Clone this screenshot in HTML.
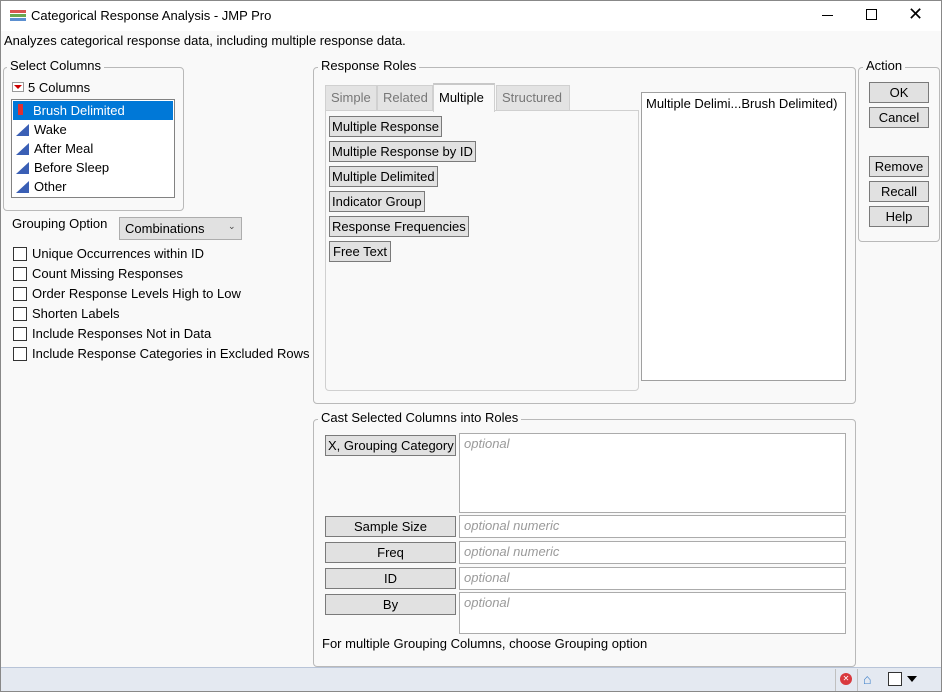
<!DOCTYPE html>
<html><head><meta charset="utf-8"><style>
*{box-sizing:border-box;margin:0;padding:0}
body{width:942px;height:692px;overflow:hidden;background:#f9f9f9;font-family:"Liberation Sans",sans-serif;font-size:13px;color:#000;position:relative}
.a{position:absolute;white-space:nowrap}
.grp{position:absolute;border:1px solid #b9b9b9;border-radius:4px}
.lg{position:absolute;background:#f9f9f9;padding:0 3px;line-height:14px}
.btn{position:absolute;background:#e1e1e1;border:1px solid #7a7a7a;height:21px;line-height:19px;padding:0 2px;white-space:nowrap}
.btc{text-align:center}
.fld{position:absolute;background:#fff;border:1px solid #ababab;color:#9a9a9a;font-style:italic;padding:2px 4px;line-height:16px}
.cb{position:absolute;left:13px;width:14px;height:14px;border:1px solid #333;background:#fff}
.cbt{position:absolute;left:32px;line-height:14px}
.tri{display:inline-block;width:0;height:0;border-left:13px solid transparent;border-bottom:12px solid #3a5fb5;vertical-align:middle}
</style></head><body>
<!-- title bar -->
<div class="a" style="left:0;top:0;width:942px;height:31px;background:#fff"></div>
<div class="a" style="left:10px;top:10px;width:16px;height:3px;background:#d9534f"></div>
<div class="a" style="left:10px;top:14px;width:16px;height:3px;background:#6aa84f"></div>
<div class="a" style="left:10px;top:18px;width:16px;height:3px;background:#5b8fd0"></div>
<div class="a" style="left:31px;top:8px;line-height:16px">Categorical Response Analysis - JMP Pro</div>
<div class="a" style="left:822px;top:15px;width:11px;height:1px;background:#000"></div>
<div class="a" style="left:866px;top:9px;width:11px;height:11px;border:1px solid #000"></div>
<div class="a" style="left:908px;top:2px;font-size:18px;line-height:24px">✕</div>
<div class="a" style="left:4px;top:33px;line-height:16px">Analyzes categorical response data, including multiple response data.</div>

<!-- Select Columns -->
<div class="grp" style="left:3px;top:67px;width:181px;height:144px"></div>
<div class="lg" style="left:7px;top:59px">Select Columns</div>
<div class="a" style="left:12px;top:82px;width:12px;height:10px;background:#fff;border:1px solid #999"></div>
<div class="a" style="left:14px;top:85px;width:0;height:0;border-left:4px solid transparent;border-right:4px solid transparent;border-top:4px solid #c00"></div>
<div class="a" style="left:28px;top:81px;line-height:14px">5 Columns</div>
<div class="a" style="left:11px;top:99px;width:164px;height:99px;background:#fff;border:1px solid #828282"></div>
<div class="a" style="left:13px;top:101px;width:160px;height:19px;background:#0078d7"></div>
<div class="a" style="left:18px;top:104px;width:5px;height:11px;background:#e03030"></div>
<div class="a" style="left:33px;top:103px;color:#fff;line-height:15px">Brush Delimited</div>
<div class="a" style="left:16px;top:121px"><span class="tri"></span></div><div class="a" style="left:34px;top:122px;line-height:15px">Wake</div>
<div class="a" style="left:16px;top:140px"><span class="tri"></span></div><div class="a" style="left:34px;top:141px;line-height:15px">After Meal</div>
<div class="a" style="left:16px;top:159px"><span class="tri"></span></div><div class="a" style="left:34px;top:160px;line-height:15px">Before Sleep</div>
<div class="a" style="left:16px;top:178px"><span class="tri"></span></div><div class="a" style="left:34px;top:179px;line-height:15px">Other</div>

<div class="a" style="left:12px;top:216px;line-height:15px">Grouping Option</div>
<div class="a" style="left:119px;top:217px;width:123px;height:23px;background:#e1e1e1;border:1px solid #adadad"></div>
<div class="a" style="left:125px;top:221px;line-height:15px">Combinations</div>
<div class="a" style="left:228px;top:221px;font-size:9px;color:#444">&#8964;</div>

<div class="cb" style="top:247px"></div><div class="cbt" style="top:247px">Unique Occurrences within ID</div>
<div class="cb" style="top:267px"></div><div class="cbt" style="top:267px">Count Missing Responses</div>
<div class="cb" style="top:287px"></div><div class="cbt" style="top:287px">Order Response Levels High to Low</div>
<div class="cb" style="top:307px"></div><div class="cbt" style="top:307px">Shorten Labels</div>
<div class="cb" style="top:327px"></div><div class="cbt" style="top:327px">Include Responses Not in Data</div>
<div class="cb" style="top:347px"></div><div class="cbt" style="top:347px">Include Response Categories in Excluded Rows</div>

<!-- Response Roles -->
<div class="grp" style="left:313px;top:67px;width:543px;height:337px"></div>
<div class="lg" style="left:318px;top:59px">Response Roles</div>
<div class="a" style="left:325px;top:85px;width:52px;height:26px;background:#e3e3e3;border:1px solid #d0d0d0;color:#777;padding:4px 0 0 5px">Simple</div>
<div class="a" style="left:377px;top:85px;width:56px;height:26px;background:#e3e3e3;border:1px solid #d0d0d0;color:#777;padding:4px 0 0 5px">Related</div>
<div class="a" style="left:496px;top:85px;width:74px;height:26px;background:#e3e3e3;border:1px solid #d0d0d0;color:#777;padding:4px 0 0 5px">Structured</div>
<div class="a" style="left:325px;top:110px;width:314px;height:281px;background:#f9f9f9;border:1px solid #d0d0d0;border-radius:0 0 4px 4px"></div>
<div class="a" style="left:433px;top:83px;width:62px;height:29px;background:#f9f9f9;border:1px solid #d0d0d0;border-top:2px solid #c8c8c8;border-bottom:none;padding:5px 0 0 5px">Multiple</div>
<div class="btn" style="left:329px;top:116px">Multiple Response</div>
<div class="btn" style="left:329px;top:141px">Multiple Response by ID</div>
<div class="btn" style="left:329px;top:166px">Multiple Delimited</div>
<div class="btn" style="left:329px;top:191px">Indicator Group</div>
<div class="btn" style="left:329px;top:216px">Response Frequencies</div>
<div class="btn" style="left:329px;top:241px;padding:0 3px">Free Text</div>
<div class="a" style="left:641px;top:92px;width:205px;height:289px;background:#fff;border:1px solid #a0a0a0;padding:3px 4px;line-height:15px;overflow:hidden">Multiple Delimi...Brush Delimited)</div>

<!-- Action -->
<div class="grp" style="left:858px;top:67px;width:82px;height:175px"></div>
<div class="lg" style="left:863px;top:59px">Action</div>
<div class="btn btc" style="left:869px;top:82px;width:60px">OK</div>
<div class="btn btc" style="left:869px;top:107px;width:60px">Cancel</div>
<div class="btn btc" style="left:869px;top:156px;width:60px">Remove</div>
<div class="btn btc" style="left:869px;top:181px;width:60px">Recall</div>
<div class="btn btc" style="left:869px;top:206px;width:60px">Help</div>

<!-- Cast -->
<div class="grp" style="left:313px;top:419px;width:543px;height:248px"></div>
<div class="lg" style="left:318px;top:411px">Cast Selected Columns into Roles</div>
<div class="btn" style="left:325px;top:435px;width:131px;overflow:hidden">X, Grouping Category</div>
<div class="btn btc" style="left:325px;top:516px;width:131px">Sample Size</div>
<div class="btn btc" style="left:325px;top:542px;width:131px">Freq</div>
<div class="btn btc" style="left:325px;top:568px;width:131px">ID</div>
<div class="btn btc" style="left:325px;top:594px;width:131px">By</div>
<div class="fld" style="left:459px;top:433px;width:387px;height:80px">optional</div>
<div class="fld" style="left:459px;top:515px;width:387px;height:23px">optional numeric</div>
<div class="fld" style="left:459px;top:541px;width:387px;height:23px">optional numeric</div>
<div class="fld" style="left:459px;top:567px;width:387px;height:23px">optional</div>
<div class="fld" style="left:459px;top:592px;width:387px;height:42px">optional</div>
<div class="a" style="left:322px;top:636px;line-height:15px">For multiple Grouping Columns, choose Grouping option</div>

<!-- status bar -->
<div class="a" style="left:0;top:667px;width:942px;height:25px;background:#e4e9f1;border-top:1px solid #b8c4d8"></div>
<div class="a" style="left:835px;top:669px;width:1px;height:22px;background:#c0c0c0"></div>
<div class="a" style="left:857px;top:669px;width:1px;height:22px;background:#c0c0c0"></div>
<div class="a" style="left:840px;top:673px;width:12px;height:12px;border-radius:50%;background:#d9393e;color:#fff;font-size:8px;line-height:12px;text-align:center">✕</div>
<div class="a" style="left:863px;top:671px;font-size:14px;color:#3a7dc9;line-height:16px">⌂</div>
<div class="a" style="left:888px;top:672px;width:14px;height:14px;background:#fff;border:1px solid #333"></div>
<div class="a" style="left:907px;top:676px;width:0;height:0;border-left:5px solid transparent;border-right:5px solid transparent;border-top:6px solid #000"></div>
<div class="a" style="left:0;top:0;width:942px;height:692px;border:1px solid #888;pointer-events:none"></div>
</body></html>
